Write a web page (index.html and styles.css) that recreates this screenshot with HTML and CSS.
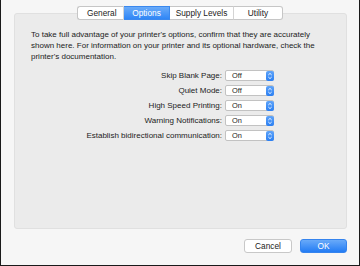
FILE: index.html
```html
<!DOCTYPE html>
<html>
<head>
<meta charset="utf-8">
<link rel="stylesheet" href="styles.css">
</head>
<body>
<div class="window">
  <div class="tabs">
    <div class="tab first">General</div>
    <div class="tab active">Options</div>
    <div class="tab">Supply Levels</div>
    <div class="tab last">Utility</div>
  </div>
  <div class="panel">
    <p class="intro">To take full advantage of your printer's options, confirm that they are accurately shown here. For information on your printer and its optional hardware, check the printer's documentation.</p>
    <div class="opts">
      <div class="lbl">Skip Blank Page:</div>
      <div class="popup"><span>Off</span><i class="step"><svg viewBox="0 0 8 10" width="8" height="10"><path d="M2.3 4 L4 2.4 L5.7 4 M2.3 6 L4 7.6 L5.7 6" fill="none" stroke="#fff" stroke-width="0.9"/></svg></i></div>
      <div class="lbl">Quiet Mode:</div>
      <div class="popup"><span>Off</span><i class="step"><svg viewBox="0 0 8 10" width="8" height="10"><path d="M2.3 4 L4 2.4 L5.7 4 M2.3 6 L4 7.6 L5.7 6" fill="none" stroke="#fff" stroke-width="0.9"/></svg></i></div>
      <div class="lbl">High Speed Printing:</div>
      <div class="popup"><span>On</span><i class="step"><svg viewBox="0 0 8 10" width="8" height="10"><path d="M2.3 4 L4 2.4 L5.7 4 M2.3 6 L4 7.6 L5.7 6" fill="none" stroke="#fff" stroke-width="0.9"/></svg></i></div>
      <div class="lbl">Warning Notifications:</div>
      <div class="popup"><span>On</span><i class="step"><svg viewBox="0 0 8 10" width="8" height="10"><path d="M2.3 4 L4 2.4 L5.7 4 M2.3 6 L4 7.6 L5.7 6" fill="none" stroke="#fff" stroke-width="0.9"/></svg></i></div>
      <div class="lbl">Establish bidirectional communication:</div>
      <div class="popup"><span>On</span><i class="step"><svg viewBox="0 0 8 10" width="8" height="10"><path d="M2.3 4 L4 2.4 L5.7 4 M2.3 6 L4 7.6 L5.7 6" fill="none" stroke="#fff" stroke-width="0.9"/></svg></i></div>
    </div>
  </div>
  <div class="buttons">
    <div class="btn">Cancel</div>
    <div class="btn primary">OK</div>
  </div>
</div>
</body>
</html>
```

FILE: styles.css
```css
html, body {
  margin: 0;
  padding: 0;
}
body {
  width: 360px;
  height: 266px;
  font-family: "Liberation Sans", Arial, sans-serif;
  color: #222;
}
.window {
  box-sizing: border-box;
  width: 360px;
  height: 266px;
  background: #f6f6f6;
  border-left: 1px solid #1a1a1a;
  border-right: 1px solid #1a1a1a;
  border-bottom: 1px solid #1a1a1a;
  padding-top: 6px;
  display: flex;
  flex-direction: column;
}
.tabs {
  display: flex;
  justify-content: center;
  position: relative;
  z-index: 1;
  height: 14px;
}
.tab {
  box-sizing: border-box;
  height: 14px;
  background: #fff;
  border-top: 1px solid #c6c6c6;
  border-bottom: 1px solid #c6c6c6;
  border-right: 1px solid #d4d4d4;
  font-size: 8.3px;
  line-height: 12px;
  padding: 0 9px;
  color: #222;
}
.tab.first {
  border-left: 1px solid #c6c6c6;
  border-radius: 3px 0 0 3px;
  width: 47px;
  text-align: center;
}
.tab.last {
  border-right: 1px solid #c6c6c6;
  border-radius: 0 3px 3px 0;
  width: 49px;
  text-align: center;
}
.tab.active {
  background: linear-gradient(#6aabf9, #2f86f6);
  border-color: #3a88ee;
  color: #fff;
  width: 46px;
  text-align: center;
  padding: 0;
}
.tabs .tab:nth-child(3) {
  width: 64px;
  text-align: center;
  padding: 0;
}
.panel {
  margin: -7px 12px 0 13px;
  height: 216px;
  box-sizing: border-box;
  background: #ebebeb;
  border: 1px solid #e0e0e0;
  border-radius: 3px;
  padding: 16px 10px 0 16px;
}
.intro {
  margin: 0;
  font-size: 8px;
  line-height: 10.8px;
  width: 292px;
}
.opts {
  display: grid;
  grid-template-columns: 191px 49px;
  column-gap: 3px;
  row-gap: 4px;
  margin-top: 8px;
  align-items: center;
}
.lbl {
  text-align: right;
  font-size: 8px;
  line-height: 11px;
}
.popup {
  box-sizing: border-box;
  height: 11px;
  background: #fff;
  border: 1px solid #c2c2c2;
  border-radius: 2px;
  display: flex;
  align-items: center;
  justify-content: space-between;
  font-size: 7.4px;
  padding-left: 6px;
}
.step {
  width: 8px;
  height: 10px;
  margin-right: -1px;
  border-radius: 2px;
  background: linear-gradient(#5fa4f9, #2a7ff3);
  display: flex;
}
.step svg {
  display: block;
}
.buttons {
  margin-top: auto;
  margin-bottom: 12px;
  display: flex;
  justify-content: flex-end;
  gap: 8px;
  padding-right: 12px;
}
.btn {
  box-sizing: border-box;
  width: 48px;
  height: 14px;
  background: #fff;
  border: 1px solid #c8c8c8;
  border-radius: 3px;
  font-size: 8.3px;
  line-height: 12px;
  text-align: center;
  color: #222;
}
.btn.primary {
  width: 47px;
  background: linear-gradient(#69aaf9, #237cf4);
  border-color: #3584ee;
  color: #fff;
}
```
